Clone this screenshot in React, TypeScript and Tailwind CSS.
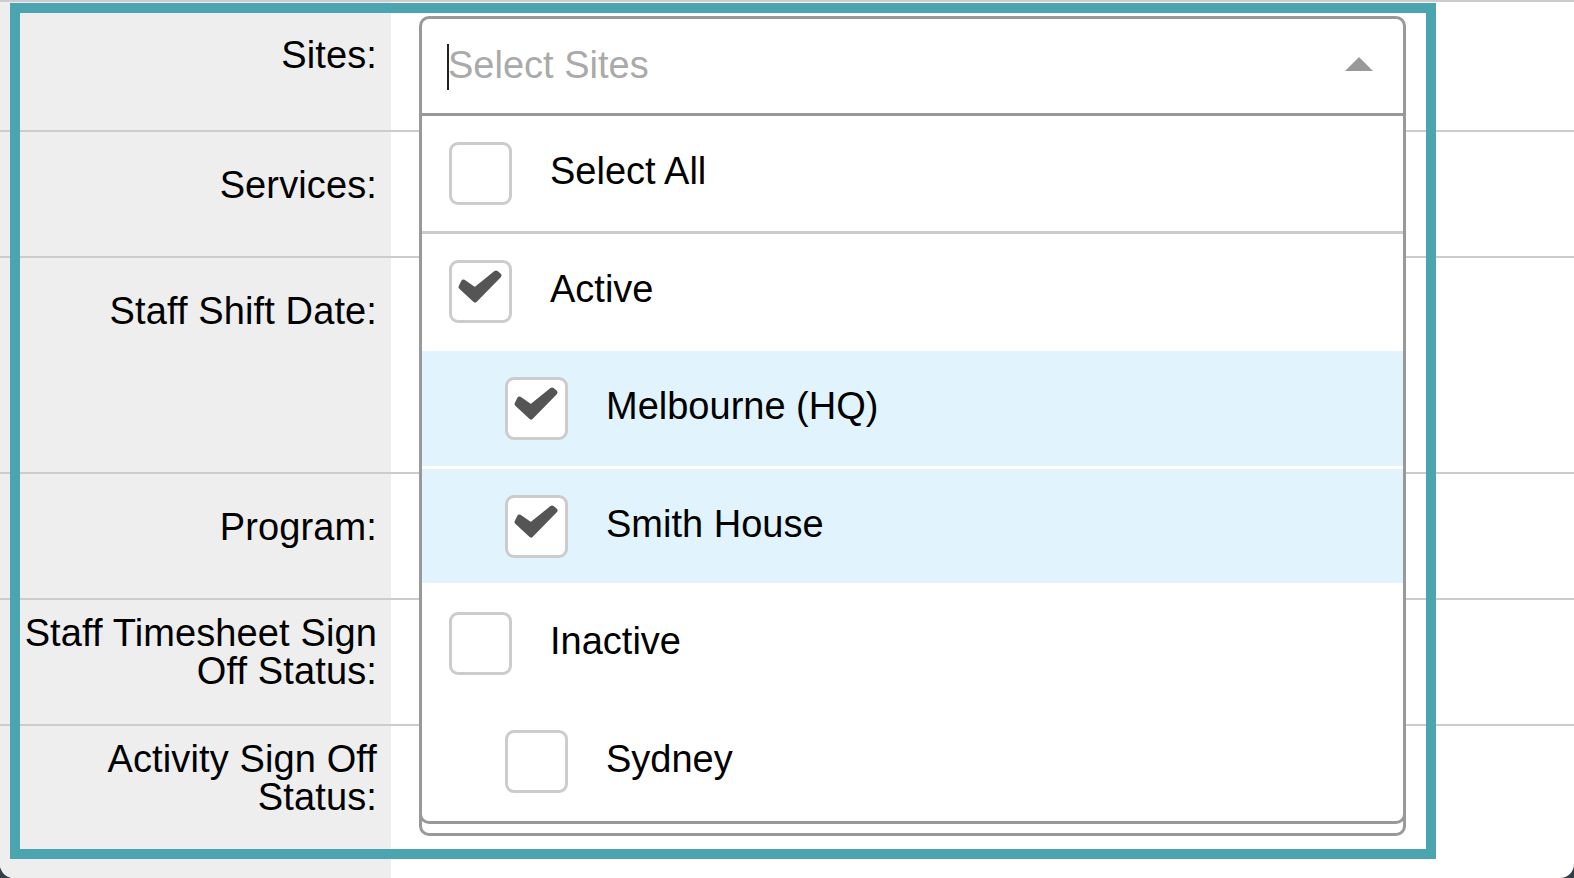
import { ReactNode } from 'react'

const rows = [
  { label: ['Sites:'], height: 'h-[128px]', pad: 'pt-[34px]' },
  { label: ['Services:'], height: 'h-[124px]', pad: 'pt-[34px]' },
  { label: ['Staff Shift Date:'], height: 'h-[214px]', pad: 'pt-[34px]' },
  { label: ['Program:'], height: 'h-[124px]', pad: 'pt-[34px]' },
  { label: ['Staff Timesheet Sign', 'Off Status:'], height: 'h-[124px]', pad: 'pt-[14px]' },
  { label: ['Activity Sign Off', 'Status:'], height: 'h-[152px]', pad: 'pt-[14px]' },
]

function Check() {
  return (
    <svg width="63" height="63" viewBox="0 0 63 63" className="absolute -left-[3px] -top-[3px]">
      <path d="M14.5 22 L26 30 L47 13 L50 15.5 L26 40 L12 27 Z" fill="#555" stroke="#555" strokeWidth="5" strokeLinejoin="round" />
    </svg>
  )
}

function Option({ children, checked, nested, cls, lift = '-mt-[6px]' }: { children: ReactNode; checked?: boolean; nested?: boolean; cls: string; lift?: string }) {
  return (
    <div className={`flex items-center ${nested ? 'pl-[83px]' : 'pl-[27px]'} ${cls}`}>
      <span className="relative w-[63px] h-[63px] shrink-0 rounded-[9px] border-[3px] border-[#ccc] bg-white">
        {checked && <Check />}
      </span>
      <span className={`ml-[38px] text-[38px] leading-[44px] text-black ${lift}`}>{children}</span>
    </div>
  )
}

export default function App() {
  return (
    <div className="relative w-[1574px] h-[878px] overflow-hidden bg-[#333f48] font-['Liberation_Sans',Arial,sans-serif]">
      <div className="h-full rounded-b-[14px] overflow-hidden bg-white border-t-2 border-[#ccc]">
        {rows.map((row, i) => (
          <div key={row.label[0]} className={`flex box-content ${row.height} ${i < rows.length - 1 ? 'border-b-2 border-[#ccc]' : ''}`}>
            <div className={`w-[391px] bg-[#eee] pr-[14px] text-right text-[38px] leading-[38px] tracking-[0.12px] text-black ${row.pad}`}>
              {row.label.map(line => (
                <div key={line}>{line}</div>
              ))}
            </div>
          </div>
        ))}
      </div>

      {/* open dropdown */}
      <div className="absolute left-[419px] top-[16px] w-[987px] h-[820px] rounded-[10px] border-[3px] border-[#999] bg-white">
        <div className="relative flex items-center justify-between h-[97px] pl-[26px] pr-[30px] border-b-[3px] border-[#999]">
          <span className="-mt-[2px] text-[38px] leading-[44px] text-[#aaa]">Select Sites</span>
          <span className="absolute left-[25px] top-[25px] w-[2px] h-[46px] bg-[#222]" />
          <svg width="28" height="14" viewBox="0 0 28 14" className="-mt-[5px]">
            <path d="M14 0 L28 14 L0 14 Z" fill="#999" />
          </svg>
        </div>
        <div className="-mx-[3px] h-[708px] rounded-b-[10px] border-x-[3px] border-b-[3px] border-[#999] bg-white">
          <Option cls="h-[115px] border-b-[3px] border-[#ccc] box-content">Select All</Option>
          <Option checked cls="h-[117px] pb-[2px]">Active</Option>
          <Option checked nested cls="h-[115px] bg-[#e1f3fd]">Melbourne (HQ)</Option>
          <Option checked nested lift="-mt-[4px]" cls="h-[114px] mt-[3px] bg-[#e1f3fd]">Smith House</Option>
          <Option lift="-mt-[4px]" cls="h-[120px]">Inactive</Option>
          <Option nested lift="-mt-[4px]" cls="h-[116px]">Sydney</Option>
        </div>
      </div>

      {/* highlight frame drawn over the page */}
      <div className="absolute left-[10px] top-[3px] w-[1426px] h-[856px] border-[10px] border-[#4aa5b0] pointer-events-none" />
    </div>
  )
}
